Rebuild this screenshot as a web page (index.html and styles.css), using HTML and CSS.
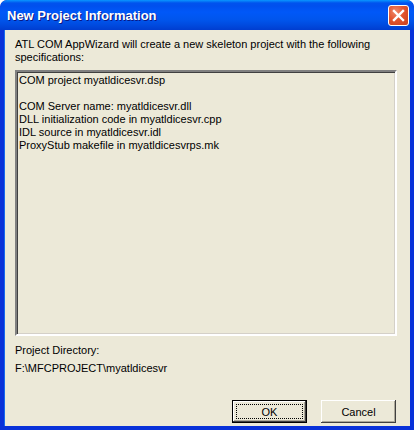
FILE: index.html
```html
<!DOCTYPE html>
<html>
<head>
<meta charset="utf-8">
<link rel="stylesheet" href="styles.css">
</head>
<body>
<div class="window">
  <div class="titlebar">
    <span class="title">New Project Information</span>
    <button class="close" aria-label="Close">
      <svg width="13" height="13" viewBox="0 0 13 13"><path d="M2 2 L11 11 M11 2 L2 11" stroke="#fff" stroke-width="2.4" stroke-linecap="square"/></svg>
    </button>
  </div>
  <div class="client">
    <p class="intro">ATL COM AppWizard will create a new skeleton project with the following specifications:</p>
    <div class="listbox">
      <div class="line">COM project myatldicesvr.dsp</div>
      <div class="line">&nbsp;</div>
      <div class="line">COM Server name: myatldicesvr.dll</div>
      <div class="line">DLL initialization code in myatldicesvr.cpp</div>
      <div class="line">IDL source in myatldicesvr.idl</div>
      <div class="line">ProxyStub makefile in myatldicesvrps.mk</div>
    </div>
    <div class="label">Project Directory:</div>
    <div class="path">F:\MFCPROJECT\myatldicesvr</div>
    <div class="buttons">
      <button class="btn default"><span class="focus">OK</span></button>
      <button class="btn"><span class="nofocus">Cancel</span></button>
    </div>
  </div>
</div>
</body>
</html>
```
FILE: styles.css
```css
html, body {
  margin: 0;
  padding: 0;
  background: #ffffff;
}
.window {
  width: 414px;
  height: 430px;
  display: flex;
  flex-direction: column;
  box-sizing: border-box;
  background: #0831d9;
  border-radius: 7px 7px 0 0;
  font-family: "Liberation Sans", Arial, sans-serif;
  font-size: 11px;
  color: #000;
  overflow: hidden;
}
.titlebar {
  height: 30px;
  flex: none;
  display: flex;
  align-items: center;
  justify-content: space-between;
  padding: 0 5px 0 7px;
  background: linear-gradient(to bottom, #0997ff 0px, #0053ee 3px, #0050ee 6px, #0058f8 12px, #0055ec 20px, #0048dc 26px, #003dd0 30px);
  border-radius: 7px 7px 0 0;
}
.title {
  color: #fff;
  font-family: "Liberation Sans", Arial, sans-serif;
  font-weight: bold;
  font-size: 13px;
  text-shadow: 1px 1px 0 #0a1883;
  margin-top: 1px;
}
.close {
  width: 21px;
  height: 21px;
  padding: 0;
  border: 1px solid #fff;
  border-radius: 3px;
  background: radial-gradient(circle at 35% 30%, #f08a6c 0%, #e2552f 45%, #c8401d 100%);
  display: flex;
  align-items: center;
  justify-content: center;
}
.client {
  flex: 1;
  margin: 0 4px 4px 4px;
  background: #ece9d8;
  padding: 8px 13px 0 10px;
  display: flex;
  flex-direction: column;
  border-left: 1px solid #166aee;
}
.intro {
  margin: 0;
  line-height: 13px;
  width: 370px;
}
.listbox {
  margin-top: 6px;
  height: 266px;
  box-sizing: border-box;
  border-style: solid;
  border-width: 2px;
  border-color: #808080 #ffffff #ffffff #808080;
  box-shadow: inset 1px 1px 0 #404040, inset -1px -1px 0 #d4d0c8;
  padding: 2px 2px;
}
.line {
  line-height: 13px;
  white-space: nowrap;
}
.label {
  margin-top: 8px;
  line-height: 13px;
}
.path {
  margin-top: 5px;
  line-height: 13px;
}
.buttons {
  margin-top: 25px;
  display: flex;
  justify-content: flex-end;
  gap: 14px;
  padding-right: 1px;
}
.btn {
  width: 75px;
  height: 23px;
  box-sizing: border-box;
  font-family: "Liberation Sans", Arial, sans-serif;
  font-size: 11px;
  color: #000;
  background: #ece9d8;
  border: none;
  padding: 0;
  box-shadow: inset -1px -1px 0 #404040, inset 1px 1px 0 #ffffff, inset -2px -2px 0 #aca899, inset 2px 2px 0 #ece9d8;
  display: flex;
  align-items: center;
  justify-content: center;
}
.btn.default {
  border: 1px solid #000;
  box-shadow: inset -1px -1px 0 #404040, inset 1px 1px 0 #ffffff, inset -2px -2px 0 #aca899;
}
.focus {
  display: flex;
  align-items: center;
  justify-content: center;
  width: 65px;
  height: 13px;
  border: 1px dotted #000;
}
.nofocus {
  display: flex;
  align-items: center;
  justify-content: center;
}
```
